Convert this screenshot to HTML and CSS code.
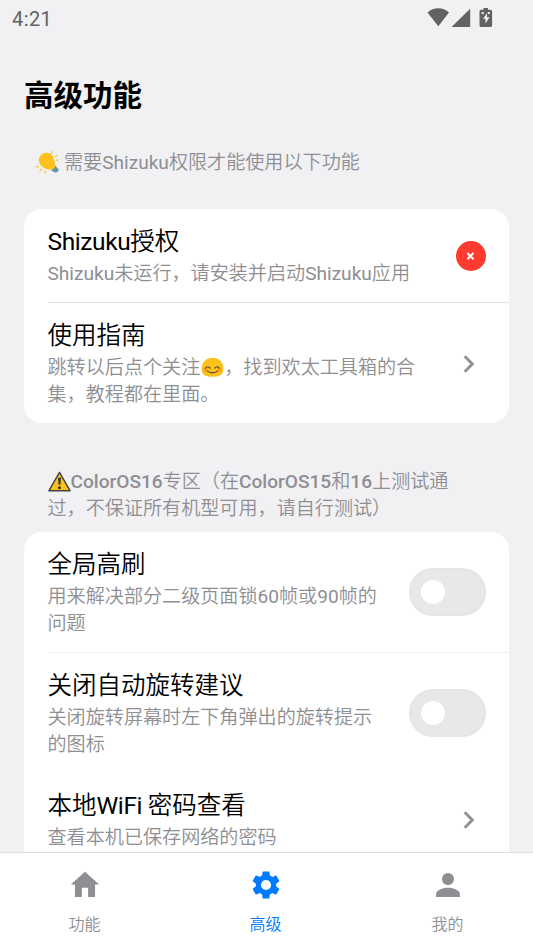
FILE: index.html
```html
<!DOCTYPE html>
<html lang="zh-CN">
<head>
<meta charset="utf-8">
<title>高级功能</title>
<link rel="stylesheet" href="styles.css">
</head>
<body>
<div class="app">
  <header class="status">
    <span class="clock">4:21</span>
    <svg class="status-icons" width="68" height="22" viewBox="0 0 68 22" fill="#626263">
      <path d="M.5 4.600C6-1.300 16.500-1.300 22 4.600L11.300 18.200Z"/>
      <path d="M43.200.8V19H24.600Z"/>
      <path fill-rule="evenodd" d="M56.500 0h4.500v1.700h2.500q1.600 0 1.600 1.600v14q0 1.600-1.600 1.600h-9.500q-1.500 0-1.500-1.600v-14q0-1.600 1.500-1.600h2.500zM60 5.300l-4 5.500h2.500v4.700l4-6.200H60zM54.700 4v2h2V4zM60.800 4v2h2V4z"/>
    </svg>
  </header>
  <main class="content">
    <h1 class="heading">高级功能</h1>
    <p class="hint"><svg class="emoji bulb" viewBox="0 0 24 24"><path d="M17 17.500l3-2.500 3.500 4c.5 2-1.500 3.800-3.500 3.500l-4-2z" fill="#5f98a8"/><path d="M3 9C3 4.600 7 1.500 11.300 1.800c5.200.4 7.900 5 8.700 13.200.2 2.700-2 4.600-4.200 4.500C8.600 19.300 3 15 3 9z" fill="#fcc21b"/><path d="M16 2.500l1-1.800M20 6l2-1.300M21.200 9.500h1.800M2.500 16l-2 1M5.500 19l-1.500 2M9.500 21l-.4 2" stroke="#fcc21b" stroke-width="1.200" stroke-linecap="round"/></svg><span>需要Shizuku权限才能使用以下功能</span></p>

    <section class="card">
      <div class="row">
        <div class="text"><h2><span class="latin">Shizuku</span>授权</h2><p>Shizuku未运行，请安装并启动Shizuku应用</p></div>
        <svg class="error" width="30" height="30" viewBox="0 0 30 30"><circle cx="15" cy="15" r="15" fill="#ff3b30"/><path d="M11.300 12l6.200 6.200M17.500 12l-6.200 6.200" stroke="#fff" stroke-width="2"/></svg>
      </div>
      <div class="divider"></div>
      <div class="row">
        <div class="text"><h2>使用指南</h2><p>跳转以后点个关注<svg class="emoji smile" viewBox="0 0 24 24"><path d="M12 1.800c7.500 0 11.300 5.500 11.300 11.300 0 6.500-3 8.600-11.300 8.600S.7 19.600.7 13.100C.7 7.300 4.500 1.800 12 1.800z" fill="#fcc21b"/><g fill="#f79329" opacity=".65"><circle cx="4.500" cy="14.500" r="2.300"/><circle cx="19.500" cy="14.500" r="2.300"/></g><path d="M4.800 12.700q2.300-3 4.600 0M14.600 12.700q2.300-3 4.600 0M6.700 15.800q5.300 3.500 10.600 0" fill="none" stroke="#4b3a32" stroke-width="1.200" stroke-linecap="round"/></svg>，找到欢太工具箱的合集，教程都在里面。</p></div>
        <svg class="chevron" viewBox="0 0 12 18"><path d="M1.700 1.300L9.300 9l-7.600 7.700"/></svg>
      </div>
    </section>

    <p class="caption"><svg class="emoji warn" viewBox="0 0 24 24"><path d="M12 2.500L23 21.600H1z" fill="#fcc21b" stroke="#424242" stroke-width="1.500" stroke-linejoin="round"/><path d="M10.500 8h3l-.5 7.500h-2z" fill="#333"/><circle cx="12" cy="18.600" r="1.600" fill="#333"/></svg><b>ColorOS16</b>专区（在<b>ColorOS15</b>和<b>16</b>上测试通过，不保证所有机型可用，请自行测试）</p>

    <section class="card">
      <div class="row">
        <div class="text"><h2>全局高刷</h2><p>用来解决部分二级页面锁60帧或90帧的问题</p></div>
        <div class="switch"><span class="knob"></span></div>
      </div>
      <div class="divider light"></div>
      <div class="row">
        <div class="text"><h2>关闭自动旋转建议</h2><p>关闭旋转屏幕时左下角弹出的旋转提示的图标</p></div>
        <div class="switch"><span class="knob"></span></div>
      </div>
      <div class="row">
        <div class="text"><h2>本地<span class="latin">WiFi </span>密码查看</h2><p>查看本机已保存网络的密码</p></div>
        <svg class="chevron" viewBox="0 0 12 18"><path d="M1.700 1.300L9.300 9l-7.600 7.700"/></svg>
      </div>
    </section>
  </main>
  <nav class="tabs">
    <a class="tab"><svg viewBox="0 0 24 24"><path d="M9.800 20.500v-6.600h4.400v6.600h4.900v-8.900H22L12 2.700 2 11.600h2.900v8.900z"/></svg><span>功能</span></a>
    <a class="tab active"><svg viewBox="0 0 24 24"><path d="M19.140 12.940c.04-.3.060-.61.060-.94 0-.32-.02-.64-.07-.94l2.030-1.580c.18-.14.230-.41.120-.61l-1.920-3.320c-.12-.22-.37-.29-.59-.22l-2.390.96c-.5-.38-1.030-.7-1.620-.94l-.36-2.540c-.04-.24-.24-.41-.48-.41h-3.840c-.24 0-.43.17-.47.41l-.36 2.540c-.59.24-1.130.57-1.620.94l-2.390-.96c-.22-.08-.47 0-.59.22L2.740 8.870c-.12.21-.08.47.12.61l2.030 1.580c-.05.3-.09.63-.09.94s.02.64.07.94l-2.030 1.580c-.18.14-.23.41-.12.61l1.920 3.320c.12.22.37.29.59.22l2.390-.96c.5.38 1.030.7 1.620.94l.36 2.540c.05.24.24.41.48.41h3.840c.24 0 .44-.17.47-.41l.36-2.540c.59-.24 1.130-.56 1.620-.94l2.390.96c.22.08.47 0 .59-.22l1.920-3.320c.12-.22.07-.47-.12-.61zM12 15.600A3.600 3.600 0 1 1 12 8.400a3.600 3.600 0 0 1 0 7.200z"/></svg><span>高级</span></a>
    <a class="tab"><svg viewBox="0 0 24 24"><circle cx="12" cy="7.800" r="4.300"/><path d="M3.600 20.500v-2c0-2.900 4.600-4.600 8.400-4.600s8.400 1.700 8.400 4.600v2z"/></svg><span>我的</span></a>
  </nav>
</div>
</body>
</html>
```

FILE: styles.css
```css
* { box-sizing: border-box; }
body { margin: 0; font-family: Roboto, "Noto Sans CJK SC DemiLight", "Noto Sans CJK SC Light", "Noto Sans CJK SC", sans-serif; background: #f1f1f3; }
h1, h2, p { margin: 0; }
.app { height: 948px; display: flex; flex-direction: column; overflow: hidden; }
.status { height: 38px; flex: none; display: flex; justify-content: space-between; align-items: center; padding: 0 38px 0 12px; }
.clock { font-size: 20px; color: #626263; letter-spacing: .4px; }
.status-icons { margin-top: -1px; }
.content { flex: 1; min-height: 0; overflow: hidden; padding: 0 24px; }
.heading { margin-top: 33px; font-family: "Noto Sans CJK SC", sans-serif; font-size: 29.500px; line-height: 44px; font-weight: 700; color: #000; }
.hint { display: flex; align-items: center; gap: 5px; margin: 34px 0 33px 12px; height: 27px; font-size: 19.100px; line-height: 27px; color: #8e8e93; white-space: nowrap; }
.emoji { width: 23px; height: 23px; display: inline-block; vertical-align: -5px; }
.smile { margin: 0 .5px; }
.card { background: #fff; border-radius: 18px; padding-left: 23.500px; }
.row { display: flex; align-items: center; justify-content: space-between; padding: 16px 23px 14.800px 0; }
.text { max-width: 370px; }
.text:has(+ .switch) { width: 334px; }
.row h2 { font-size: 24.500px; line-height: 34px; font-weight: 400; color: #000; margin-bottom: 1.600px; white-space: nowrap; }
.latin { letter-spacing: -.4px; }
.row p, .caption { font-size: 19.100px; line-height: 26.800px; color: #8e8e93; }
.row p { padding-top: .4px; margin-bottom: -.4px; }
.divider { height: 1px; margin-left: .5px; background: #e2e2e5; }
.divider.light { background: #f0f0f1; }
.error { flex: none; }
.chevron { width: 12px; height: 18px; flex: none; margin-right: 11.500px; }
.chevron path { fill: none; stroke: #8e8e93; stroke-width: 2.800; }
.caption { margin: 46px 0 9px 23.500px; width: 410px; }
.caption b { font-weight: 500; }
.switch { flex: none; width: 77px; height: 48px; border: 2px solid #e4e4e9; border-radius: 24px; background: #e8e8e8; display: flex; align-items: center; padding-left: 9.500px; }
.knob { width: 24px; height: 24px; border-radius: 50%; background: #fff; }
.tabs { height: 96px; flex: none; background: #fff; border-top: 1px solid #dededf; display: grid; grid-template-columns: 169px 1fr 171px; }
.tab { display: flex; flex-direction: column; align-items: center; padding-top: 15px; color: #8e8e93; font-size: 16px; line-height: 24px; }
.tab svg { width: 34px; height: 34px; fill: currentColor; margin-bottom: 11px; }
.tab.active { color: #007aff; }
```
